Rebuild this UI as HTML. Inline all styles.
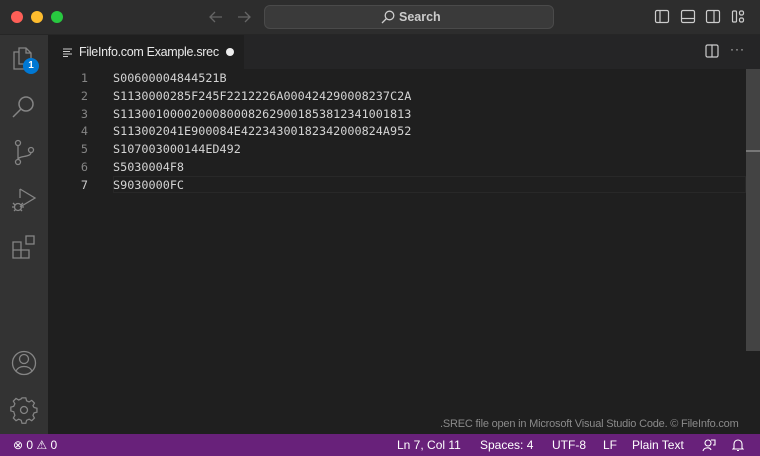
<!DOCTYPE html>
<html><head><style>
*{margin:0;padding:0;box-sizing:border-box}
body{width:760px;height:456px;background:#1f1f1f;font-family:"Liberation Sans",sans-serif;overflow:hidden;position:relative}
.abs{position:absolute}
#title{left:0;top:0;width:760px;height:35px;background:#2d2d2d;border-bottom:1px solid #262626}
.dot{width:12px;height:12px;border-radius:50%;top:11px}
#act{left:0;top:35px;width:48px;height:399px;background:#333333}
#tabs{left:48px;top:35px;width:712px;height:34px;background:#252526}
#tab{left:48px;top:35px;width:196px;height:34px;background:#1f1f1f;color:#e8e8e8;font-size:12.5px;letter-spacing:-0.3px}
.code{font-family:"DejaVu Sans Mono",monospace;font-size:11.8px;color:#d4d4d4;white-space:pre}
.ln{font-family:"DejaVu Sans Mono",monospace;font-size:11.8px;color:#858585;width:40px;text-align:right;left:48px}
#status{left:0;top:434px;width:760px;height:22px;background:#68217a;color:#fff;font-size:12px}
svg{position:absolute}
</style></head><body>
<div id="title" class="abs"></div>
<div class="abs dot" style="left:11px;background:#fe5f57"></div>
<div class="abs dot" style="left:31px;background:#febc2e"></div>
<div class="abs dot" style="left:51px;background:#28c840"></div>
<svg style="left:208px;top:10px" width="44" height="14" fill="none" stroke="#666" stroke-width="1.3"><path d="M14 7H2M7 2 2 7l5 5M30 7h12M37 2l5 5-5 5"/></svg>
<div class="abs" style="left:264px;top:5px;width:290px;height:24px;border:1px solid #4a4a4a;background:#3a3a3a;border-radius:6px"></div>
<svg style="left:381px;top:10px" width="14" height="14" fill="none" stroke="#ccc" stroke-width="1.3"><circle cx="8.5" cy="5.5" r="4.3"/><path d="M5.5 8.5 1 13"/></svg>
<div class="abs" style="left:399px;top:10px;color:#ccc;font-size:12.5px;font-weight:bold">Search</div>
<svg style="left:654px;top:9px" width="96" height="16" fill="none" stroke="#ccc" stroke-width="1.2"><rect x="1.5" y="1.5" width="13" height="12" rx="1.5"/><path d="M6 1.5v12"/><rect x="27.5" y="1.5" width="13" height="12" rx="1.5"/><path d="M27.5 9.5h13"/><rect x="52.5" y="1.5" width="13" height="12" rx="1.5"/><path d="M60 1.5v12"/><rect x="78.5" y="2" width="4" height="11" rx="1"/><rect x="85.5" y="2" width="4" height="4" rx="1.5"/><rect x="85.5" y="9" width="4" height="4" rx="1.5"/></svg>
<div id="act" class="abs"></div>
<svg style="left:10px;top:44px" width="30" height="30" fill="none" stroke="#858585" stroke-width="1.3"><path d="M9 4h7l5 5v11H9z M16 4v5h5 M9 8H4v17h11v-5"/></svg>
<div class="abs" style="left:23px;top:58px;width:16px;height:16px;border-radius:50%;background:#0078d4;color:#fff;font-size:10px;font-weight:bold;text-align:center;line-height:16px">1</div>
<svg style="left:10px;top:92px" width="30" height="30" fill="none" stroke="#858585" stroke-width="1.5"><circle cx="16" cy="12" r="7"/><path d="M11 17 3 25"/></svg>
<svg style="left:10px;top:138px" width="30" height="30" fill="none" stroke="#858585" stroke-width="1.3"><circle cx="8" cy="5" r="2.5"/><circle cx="8" cy="24" r="2.5"/><circle cx="21" cy="12" r="2.5"/><path d="M8 7.5v14M21 14.5c0 5-13 3-13 7"/></svg>
<svg style="left:10px;top:186px" width="30" height="30" fill="none" stroke="#858585" stroke-width="1.3"><path d="M10 3v9M10 3l15 9-15 9"/><circle cx="8" cy="21" r="3.5"/><path d="M3 17l2 2M13 17l-2 2M2 21h2M12 21h2M4 25l1.5-1.5M12 25l-1.5-1.5"/></svg>
<svg style="left:10px;top:234px" width="30" height="30" fill="none" stroke="#858585" stroke-width="1.3"><path d="M3 8h8v16H3zM3 16h16v8H11"/><rect x="16" y="2" width="8" height="8"/></svg>
<svg style="left:9px;top:348px" width="30" height="30" fill="none" stroke="#858585" stroke-width="1.3"><circle cx="15" cy="15" r="11.5"/><circle cx="15" cy="11" r="4.5"/><path d="M7 23c3-6 13-6 16 0"/></svg>
<svg style="left:9px;top:395px" width="30" height="30" fill="none" stroke="#858585" stroke-width="1.3"><circle cx="15" cy="15" r="3.5"/><path d="M13 3h4l.8 3 2.6 1.2 2.8-1.6 2.8 2.8-1.6 2.8L25.6 13l3 .8v4l-3 .8-1.2 2.6 1.6 2.8-2.8 2.8-2.8-1.6-2.6 1.2-.8 3h-4l-.8-3-2.6-1.2-2.8 1.6-2.8-2.8 1.6-2.8L4.4 17.4l-3-.8v-4l3-.8 1.2-2.6L4 6.4l2.8-2.8 2.8 1.6L12.2 4z" transform="translate(0.5 0) scale(0.96)"/></svg>
<div id="tabs" class="abs"></div>
<div id="tab" class="abs"><svg style="left:15px;top:13px" width="10" height="9" stroke="#ccc" stroke-width="1"><path d="M0 1h9M0 3.5h7M0 6h9M0 8.5h5"/></svg><span class="abs" style="left:31px;top:10px">FileInfo.com Example.srec</span><div class="abs" style="left:178px;top:13px;width:8px;height:8px;border-radius:50%;background:#eee"></div></div>
<svg style="left:705px;top:44px" width="14" height="14" fill="none" stroke="#ccc" stroke-width="1.2"><rect x="1" y="1" width="12" height="12" rx="1.5"/><path d="M7 1v12"/></svg>
<div class="abs" style="left:730px;top:42px;color:#ccc;font-size:12px;letter-spacing:1px">···</div>
<div class="abs" style="left:113px;top:176px;width:633px;height:17px;border:1px solid #282828"></div>
<div class="abs ln" style="top:70px;line-height:17.8px">1<br>2<br>3<br>4<br>5<br>6<br><span style="color:#ccc">7</span></div>
<div class="abs code" style="left:113px;top:70px;line-height:17.8px">S00600004844521B
S1130000285F245F2212226A000424290008237C2A
S11300100002000800082629001853812341001813
S113002041E900084E42234300182342000824A952
S107003000144ED492
S5030004F8
S9030000FC</div>
<div class="abs" style="left:746px;top:69px;width:14px;height:282px;background:#434343"></div>
<div class="abs" style="left:746px;top:150px;width:14px;height:2px;background:#777"></div>
<div class="abs" style="left:440px;top:418px;color:#8a8a8a;font-size:11px;letter-spacing:-0.2px">.SREC file open in Microsoft Visual Studio Code. © FileInfo.com</div>
<div id="status" class="abs">
<span class="abs" style="left:13px;top:4px">⊗ 0 ⚠ 0</span>
<span class="abs" style="left:397px;top:4px">Ln 7, Col 11</span>
<span class="abs" style="left:480px;top:4px">Spaces: 4</span>
<span class="abs" style="left:552px;top:4px">UTF-8</span>
<span class="abs" style="left:603px;top:4px">LF</span>
<span class="abs" style="left:632px;top:4px">Plain Text</span>
<svg style="left:702px;top:4px" width="14" height="14" fill="none" stroke="#fff" stroke-width="1.1"><circle cx="6" cy="5" r="3"/><path d="M1 13c1-4 7-4 8-1M9 2h4v5h-2"/></svg>
<svg style="left:732px;top:4px" width="12" height="14" fill="none" stroke="#fff" stroke-width="1.1"><path d="M2 10V6a4 4 0 0 1 8 0v4l1 1H1zM5 12.5h2"/></svg>
</div>
</body></html>
